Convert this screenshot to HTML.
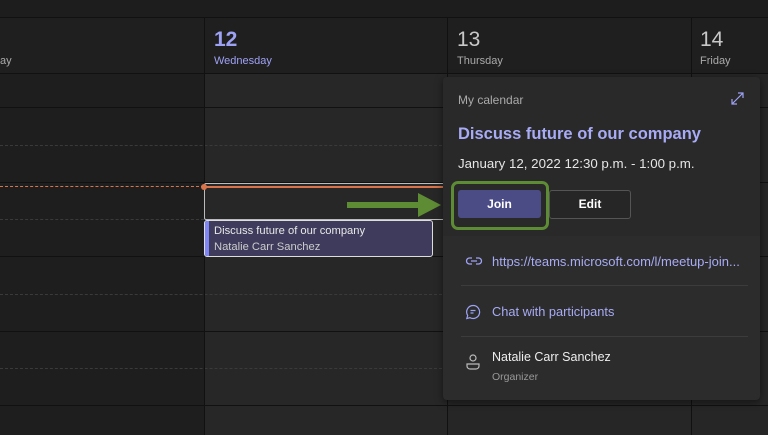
<!DOCTYPE html>
<html><head><meta charset="utf-8"><style>
*{margin:0;padding:0;box-sizing:border-box}
body{width:768px;height:435px;overflow:hidden;background:#1f1f1f;font-family:"Liberation Sans",sans-serif;position:relative}
.a{position:absolute}
.h{position:absolute;height:1px;background:#111}
.d{position:absolute;height:0;border-top:1px dashed #3a3a3a}
.v{position:absolute;width:1px;background:#111}
</style></head><body>
<div class="a" style="left:0;top:0;width:768px;height:17px;background:#1d1d1d"></div>
<div class="a" style="left:0;top:17px;width:768px;height:56px;background:#1f1f1f"></div>
<div class="a" style="left:0;top:73px;width:204px;height:362px;background:#1e1e1e"></div>
<div class="a" style="left:204px;top:73px;width:243px;height:362px;background:#272727"></div>
<div class="a" style="left:447px;top:73px;width:321px;height:362px;background:#262626"></div>
<div class="h" style="left:0;top:17px;width:768px"></div>
<div class="h" style="left:0;top:73px;width:768px"></div>
<div class="h" style="left:0;top:107px;width:768px"></div>
<div class="h" style="left:0;top:182px;width:768px"></div>
<div class="h" style="left:0;top:256px;width:768px"></div>
<div class="h" style="left:0;top:331px;width:768px"></div>
<div class="h" style="left:0;top:405px;width:768px"></div>
<div class="d" style="left:0;top:145px;width:447px"></div>
<div class="d" style="left:0;top:219px;width:204px"></div>
<div class="d" style="left:0;top:294px;width:447px"></div>
<div class="d" style="left:0;top:368px;width:447px"></div>
<div class="v" style="left:204px;top:17px;height:418px"></div>
<div class="v" style="left:447px;top:17px;height:418px"></div>
<div class="v" style="left:691px;top:17px;height:418px"></div>
<div class="a" style="left:0;top:55px;font-size:11px;color:#aaa">ay</div>
<div class="a" style="left:214px;top:28px;font-size:21px;font-weight:bold;color:#9ea2f5">12</div>
<div class="a" style="left:214px;top:55px;font-size:11px;color:#9ea2f5">Wednesday</div>
<div class="a" style="left:457px;top:28px;font-size:21px;color:#c8c8c8">13</div>
<div class="a" style="left:457px;top:55px;font-size:11px;color:#aaa">Thursday</div>
<div class="a" style="left:700px;top:28px;font-size:21px;color:#c8c8c8">14</div>
<div class="a" style="left:700px;top:55px;font-size:11px;color:#aaa">Friday</div>
<div class="a" style="left:0;top:186px;width:204px;border-top:1px dashed #d9744a"></div>
<div class="a" style="left:204px;top:183px;width:243px;height:37px;border:1px solid #bbb;border-right:none;border-radius:2px"></div>
<div class="a" style="left:204px;top:186px;width:243px;height:2px;background:#d9744a"></div>
<div class="a" style="left:201px;top:184px;width:6px;height:6px;border-radius:3px;background:#d9744a"></div>
<div class="a" style="left:204px;top:220px;width:229px;height:37px;background:#3e3b5c;border:1px solid #ddd;border-radius:3px;overflow:hidden">
<div class="a" style="left:0;top:0;width:4px;height:37px;background:#7f85f5"></div>
<div class="a" style="left:9px;top:4px;font-size:11.2px;color:#e8e8e8">Discuss future of our company</div>
<div class="a" style="left:9px;top:20px;font-size:11.2px;color:#ccc">Natalie Carr Sanchez</div>
</div>
<svg class="a" style="left:340px;top:190px" width="110" height="30"><rect x="7" y="12" width="75" height="6" fill="#5e8c34"/><polygon points="78,3 101,15 78,27" fill="#5e8c34"/></svg>
<div class="a" style="left:443px;top:77px;width:317px;height:323px;background:#2c2c2c;border-radius:4px;box-shadow:0 2px 8px rgba(0,0,0,.5)">
<div class="a" style="left:0;top:0;width:317px;height:159px;background:#292929;border-radius:4px 4px 0 0"></div>
<div class="a" style="left:15px;top:16px;font-size:12px;color:#aaa">My calendar</div>
<svg class="a" style="left:287px;top:14px" width="15" height="15" fill="none" stroke="#9ea2f5" stroke-width="1.2"><path d="M2 13L13 2M8 2h5v5M2 8v5h5"/></svg>
<div class="a" style="left:15px;top:48px;font-size:16.5px;font-weight:bold;color:#a8abf5">Discuss future of our company</div>
<div class="a" style="left:15px;top:79px;font-size:13.3px;color:#e6e6e6">January 12, 2022 12:30 p.m. - 1:00 p.m.</div>
<div class="a" style="left:8px;top:104px;width:98px;height:49px;border:3px solid #5e8c34;border-radius:7px"></div>
<div class="a" style="left:15px;top:113px;width:83px;height:28px;background:#4b4c86;border-radius:3px;color:#fff;font-size:12px;font-weight:bold;text-align:center;line-height:28px">Join</div>
<div class="a" style="left:106px;top:113px;width:82px;height:29px;border:1px solid #555;border-radius:3px;color:#fff;font-size:12px;font-weight:bold;text-align:center;line-height:27px;background:#262626">Edit</div>
<svg class="a" style="left:22px;top:177px" width="18" height="14" fill="none" stroke="#9ea2f5" stroke-width="1.3"><path d="M7 4H4.5a3 3 0 0 0 0 6H7M11 4h2.5a3 3 0 0 1 0 6H11M6 7h6"/></svg>
<div class="a" style="left:49px;top:177px;font-size:13px;color:#a8abf5">https://teams.microsoft.com/l/meetup-join...</div>
<div class="a" style="left:18px;top:208px;width:287px;height:1px;background:#3c3c3c"></div>
<svg class="a" style="left:22px;top:227px" width="16" height="16" fill="none" stroke="#9ea2f5" stroke-width="1.2"><path d="M8 1.5a6.5 6.5 0 1 1-3 12.2L1.8 14.5l.9-3A6.5 6.5 0 0 1 8 1.5zM5.5 6.5h5M5.5 9h3"/></svg>
<div class="a" style="left:49px;top:227px;font-size:12.8px;color:#a8abf5">Chat with participants</div>
<div class="a" style="left:18px;top:259px;width:287px;height:1px;background:#3c3c3c"></div>
<svg class="a" style="left:22px;top:276px" width="16" height="18" fill="none" stroke="#bbb" stroke-width="1.2"><circle cx="8" cy="5" r="3"/><path d="M2 11h12v2a3 3 0 0 1-3 3H5a3 3 0 0 1-3-3z"/></svg>
<div class="a" style="left:49px;top:273px;font-size:12.5px;color:#eee">Natalie Carr Sanchez</div>
<div class="a" style="left:49px;top:294px;font-size:10.5px;color:#999">Organizer</div>
</div>
</body></html>
